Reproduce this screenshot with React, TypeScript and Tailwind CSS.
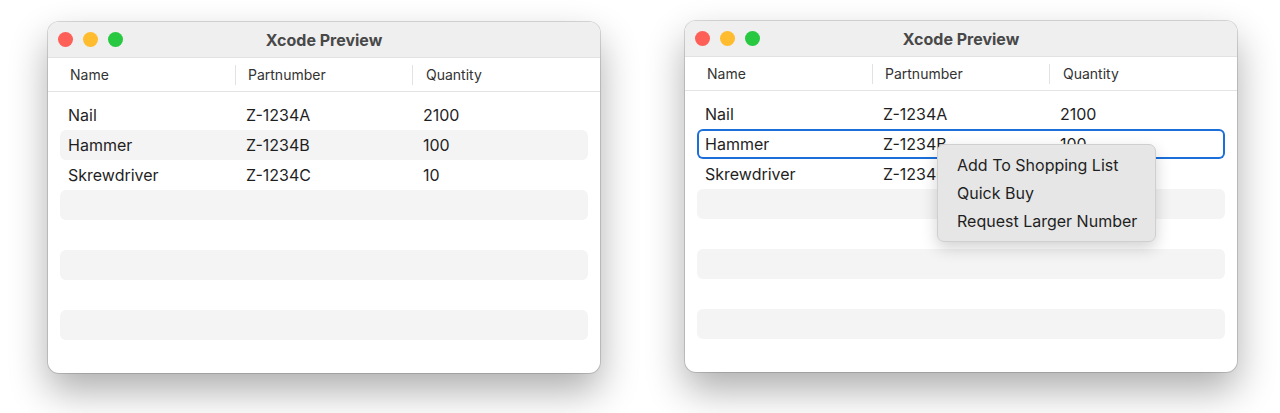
import React from 'react'

type Part = { name: string; part: string; qty: string }

const parts: Part[] = [
  { name: 'Nail', part: 'Z-1234A', qty: '2100' },
  { name: 'Hammer', part: 'Z-1234B', qty: '100' },
  { name: 'Skrewdriver', part: 'Z-1234C', qty: '10' },
]

const font = { fontFamily: 'Inter, "Noto Sans", sans-serif' }

function TrafficLights() {
  return (
    <div className="flex items-center gap-[10px] pl-[10px]">
      <span className="w-[15px] h-[15px] rounded-full bg-[#fe5f57]" />
      <span className="w-[15px] h-[15px] rounded-full bg-[#febc2e]" />
      <span className="w-[15px] h-[15px] rounded-full bg-[#28c840]" />
    </div>
  )
}

function Header() {
  return (
    <div className="flex items-center h-[34px] border-b border-[#e4e4e4] text-[14px] text-[#333333]">
      <div className="w-[187px] pl-[22px]">Name</div>
      <div className="flex items-center w-[177px]">
        <span className="w-px h-[20px] bg-[#e2e2e2]" />
        <span className="pl-[12px]">Partnumber</span>
      </div>
      <div className="flex items-center">
        <span className="w-px h-[20px] bg-[#e2e2e2]" />
        <span className="pl-[13px]">Quantity</span>
      </div>
    </div>
  )
}

function Row({ item, striped, selected }: { item?: Part; striped: boolean; selected?: boolean }) {
  const base = 'flex items-center h-[30px] px-[8px] rounded-[6px] text-[16px] text-[#1f1f1f]'
  const look = selected
    ? 'ring-2 ring-inset ring-[#1a6fd9]'
    : striped
      ? 'bg-[#f4f4f4]'
      : ''
  return (
    <div className={`${base} ${look}`}>
      {item && (
        <>
          <span className="w-[178px]">{item.name}</span>
          <span className="w-[177px]">{item.part}</span>
          <span>{item.qty}</span>
        </>
      )}
    </div>
  )
}

function PreviewWindow({ withMenu }: { withMenu?: boolean }) {
  const rows = Array.from({ length: 9 }, (_, i) => parts[i])
  return (
    <div
      className="relative w-[552px] h-[351px] rounded-[11px] bg-white overflow-hidden shadow-[0_18px_38px_rgba(0,0,0,0.32),0_0_0_1px_rgba(0,0,0,0.14)]"
      style={font}
    >
      <div className="relative flex items-center h-[36px] bg-[#efefef] border-b border-[#e2e2e2]">
        <TrafficLights />
        <div className="absolute inset-0 flex items-center justify-center text-[16px] font-bold text-[#484848]">
          Xcode Preview
        </div>
      </div>
      <Header />
      <div className="flex flex-col px-[12px] pt-[8px]">
        {rows.map((item, i) => (
          <Row key={i} item={item} striped={i % 2 === 1} selected={withMenu && i === 1} />
        ))}
      </div>
      {withMenu && (
        <div className="absolute left-[252px] top-[123px] w-[219px] pt-[6px] pb-[6px] rounded-[7px] bg-[#e6e6e6] border border-[#cfcfcf] shadow-[0_6px_16px_rgba(0,0,0,0.18)] text-[16px] text-[#1f1f1f]">
          <div className="h-[28px] flex items-center pl-[19px]">Add To Shopping List</div>
          <div className="h-[28px] flex items-center pl-[19px]">Quick Buy</div>
          <div className="h-[28px] flex items-center pl-[19px]">Request Larger Number</div>
        </div>
      )}
    </div>
  )
}

export default function App() {
  return (
    <div className="w-[1280px] h-[413px] bg-white overflow-hidden flex items-start gap-[85px] pl-[48px]">
      <div className="mt-[22px]">
        <PreviewWindow />
      </div>
      <div className="mt-[21px]">
        <PreviewWindow withMenu />
      </div>
    </div>
  )
}
